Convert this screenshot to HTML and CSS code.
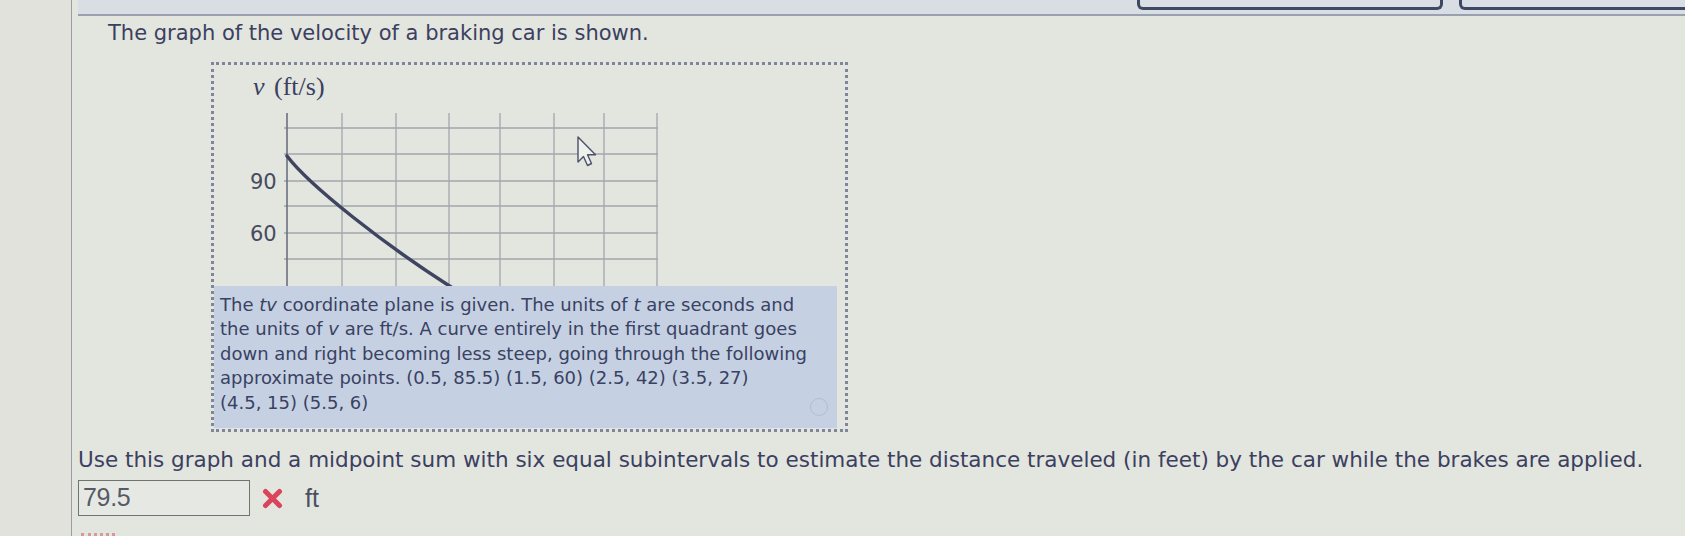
FILE: index.html
```html
<!DOCTYPE html>
<html>
<head>
<meta charset="utf-8">
<link rel="stylesheet" href="styles.css">
</head>
<body>
<div class="gutter"></div>
<div class="main">
  <div class="topbar">
    <span class="tab tab-a"></span>
    <span class="tab tab-b"></span>
  </div>
  <p class="title">The graph of the velocity of a braking car is shown.</p>
  <div class="figure">
    <svg class="graph" width="631" height="221" viewBox="0 0 631 221">
      <text class="axis-label" x="39" y="30"><tspan class="var">v</tspan></text>
      <text class="axis-label" x="60" y="30">(ft/s)</text>
      <g class="grid">
        <line x1="128" y1="48" x2="128" y2="221"/>
        <line x1="182" y1="48" x2="182" y2="221"/>
        <line x1="235" y1="48" x2="235" y2="221"/>
        <line x1="286" y1="48" x2="286" y2="221"/>
        <line x1="340" y1="48" x2="340" y2="221"/>
        <line x1="390" y1="48" x2="390" y2="221"/>
        <line x1="443" y1="48" x2="443" y2="221"/>
        <line x1="70" y1="63" x2="444" y2="63"/>
        <line x1="70" y1="89" x2="444" y2="89"/>
        <line x1="70" y1="116" x2="444" y2="116"/>
        <line x1="70" y1="141" x2="444" y2="141"/>
        <line x1="70" y1="168" x2="444" y2="168"/>
        <line x1="70" y1="194" x2="444" y2="194"/>
      </g>
      <line class="axis" x1="73" y1="48" x2="73" y2="221"/>
      <text class="tick" x="36" y="124">90</text>
      <text class="tick" x="36" y="176">60</text>
      <path class="curve" d="M73 91 C 95 120, 170 180, 245 227"/>
      <path class="cursor" d="M364 72 L364 97 L369.5 91.5 L373.5 100.5 L377.5 98.5 L373.5 89.8 L381.5 89.8 Z"/>
    </svg>
    <div class="caption">The <i>tv</i> coordinate plane is given. The units of <i>t</i> are seconds and the units of <i>v</i> are ft/s. A curve entirely in the first quadrant goes down and right becoming less steep, going through the following approximate points. (0.5, 85.5) (1.5, 60) (2.5, 42) (3.5, 27)<br>(4.5, 15) (5.5, 6)<span class="info"></span></div>
  </div>
  <p class="question">Use this graph and a midpoint sum with six equal subintervals to estimate the distance traveled (in feet) by the car while the brakes are applied.</p>
  <div class="answer">
    <span class="input">79.5</span>
    <svg class="wrong" width="21" height="21" viewBox="0 0 21 21">
      <line x1="3.5" y1="3.5" x2="17.5" y2="17.5"/>
      <line x1="17.5" y1="3.5" x2="3.5" y2="17.5"/>
    </svg>
    <span class="unit">ft</span>
  </div>
  <div class="next-mark"></div>
</div>
</body>
</html>
```
FILE: styles.css
```css
html, body {
  margin: 0;
  padding: 0;
}
body {
  display: flex;
  height: 536px;
  background: #e3e5df;
  font-family: "DejaVu Sans", Verdana, sans-serif;
  color: #3b4060;
  overflow: hidden;
}
.gutter {
  width: 71px;
  flex: none;
  background: #e0e2db;
  border-right: 1px solid #9a9ea2;
}
.main {
  flex: 1;
  padding-left: 6px;
}
.topbar {
  height: 14px;
  background: #d8dee4;
  border-bottom: 2px solid #98a1ad;
  display: flex;
  justify-content: flex-end;
  align-items: flex-start;
  gap: 16px;
}
.tab {
  display: block;
  height: 7px;
  border: 3px solid #3e4863;
  border-top: none;
  border-radius: 0 0 6px 6px;
}
.tab-a { width: 300px; }
.tab-b { width: 230px; margin-right: -10px; }
.title {
  margin: 4px 0 0 30px;
  font-size: 21px;
  line-height: 26px;
}
.figure {
  margin: 16px 0 0 133px;
  width: 631px;
  border: 3px dotted #7f869c;
  padding-bottom: 1px;
}
.graph {
  display: block;
}
.axis-label {
  font-family: "Liberation Serif", serif;
  font-size: 26px;
  fill: #3b4060;
}
.var {
  font-style: italic;
}
.tick {
  font-family: "DejaVu Sans", sans-serif;
  font-size: 21px;
  fill: #474b60;
}
.grid line {
  stroke: #a3a6ac;
  stroke-width: 1.3;
}
.axis {
  stroke: #6b6f80;
  stroke-width: 1.6;
}
.curve {
  fill: none;
  stroke: #3f4560;
  stroke-width: 3.5;
  stroke-linecap: round;
}
.cursor {
  fill: #eef0ec;
  stroke: #4a5068;
  stroke-width: 1.4;
  stroke-linejoin: round;
}
.caption {
  position: relative;
  width: 596px;
  height: 135px;
  padding: 7px 21px 0 6px;
  background: #c5d1e3;
  font-size: 18px;
  line-height: 24.4px;
  color: #3a4162;
}
.info {
  position: absolute;
  right: 9px;
  bottom: 12px;
  width: 16px;
  height: 16px;
  border: 1px solid #b1bdd1;
  border-radius: 50%;
}
.question {
  margin: 15px 0 0 0;
  font-size: 21.5px;
  line-height: 26px;
}
.answer {
  display: flex;
  align-items: center;
  margin-top: 7px;
  height: 36px;
}
.input {
  box-sizing: border-box;
  width: 172px;
  height: 36px;
  border: 1.5px solid #6f7371;
  background: #e6e9e3;
  font-family: "Liberation Sans", Arial, sans-serif;
  font-size: 25px;
  line-height: 33px;
  padding-left: 4px;
  letter-spacing: -0.3px;
  color: #555a66;
}
.wrong {
  margin-left: 12px;
}
.wrong line {
  stroke: #d9455a;
  stroke-width: 5;
  stroke-linecap: round;
}
.unit {
  margin-left: 22px;
  font-family: "Liberation Sans", Arial, sans-serif;
  font-size: 25px;
  color: #4a4f60;
}
.next-mark {
  margin: 17px 0 0 3px;
  width: 34px;
  border-top: 3px dotted #d69a9a;
}
```
